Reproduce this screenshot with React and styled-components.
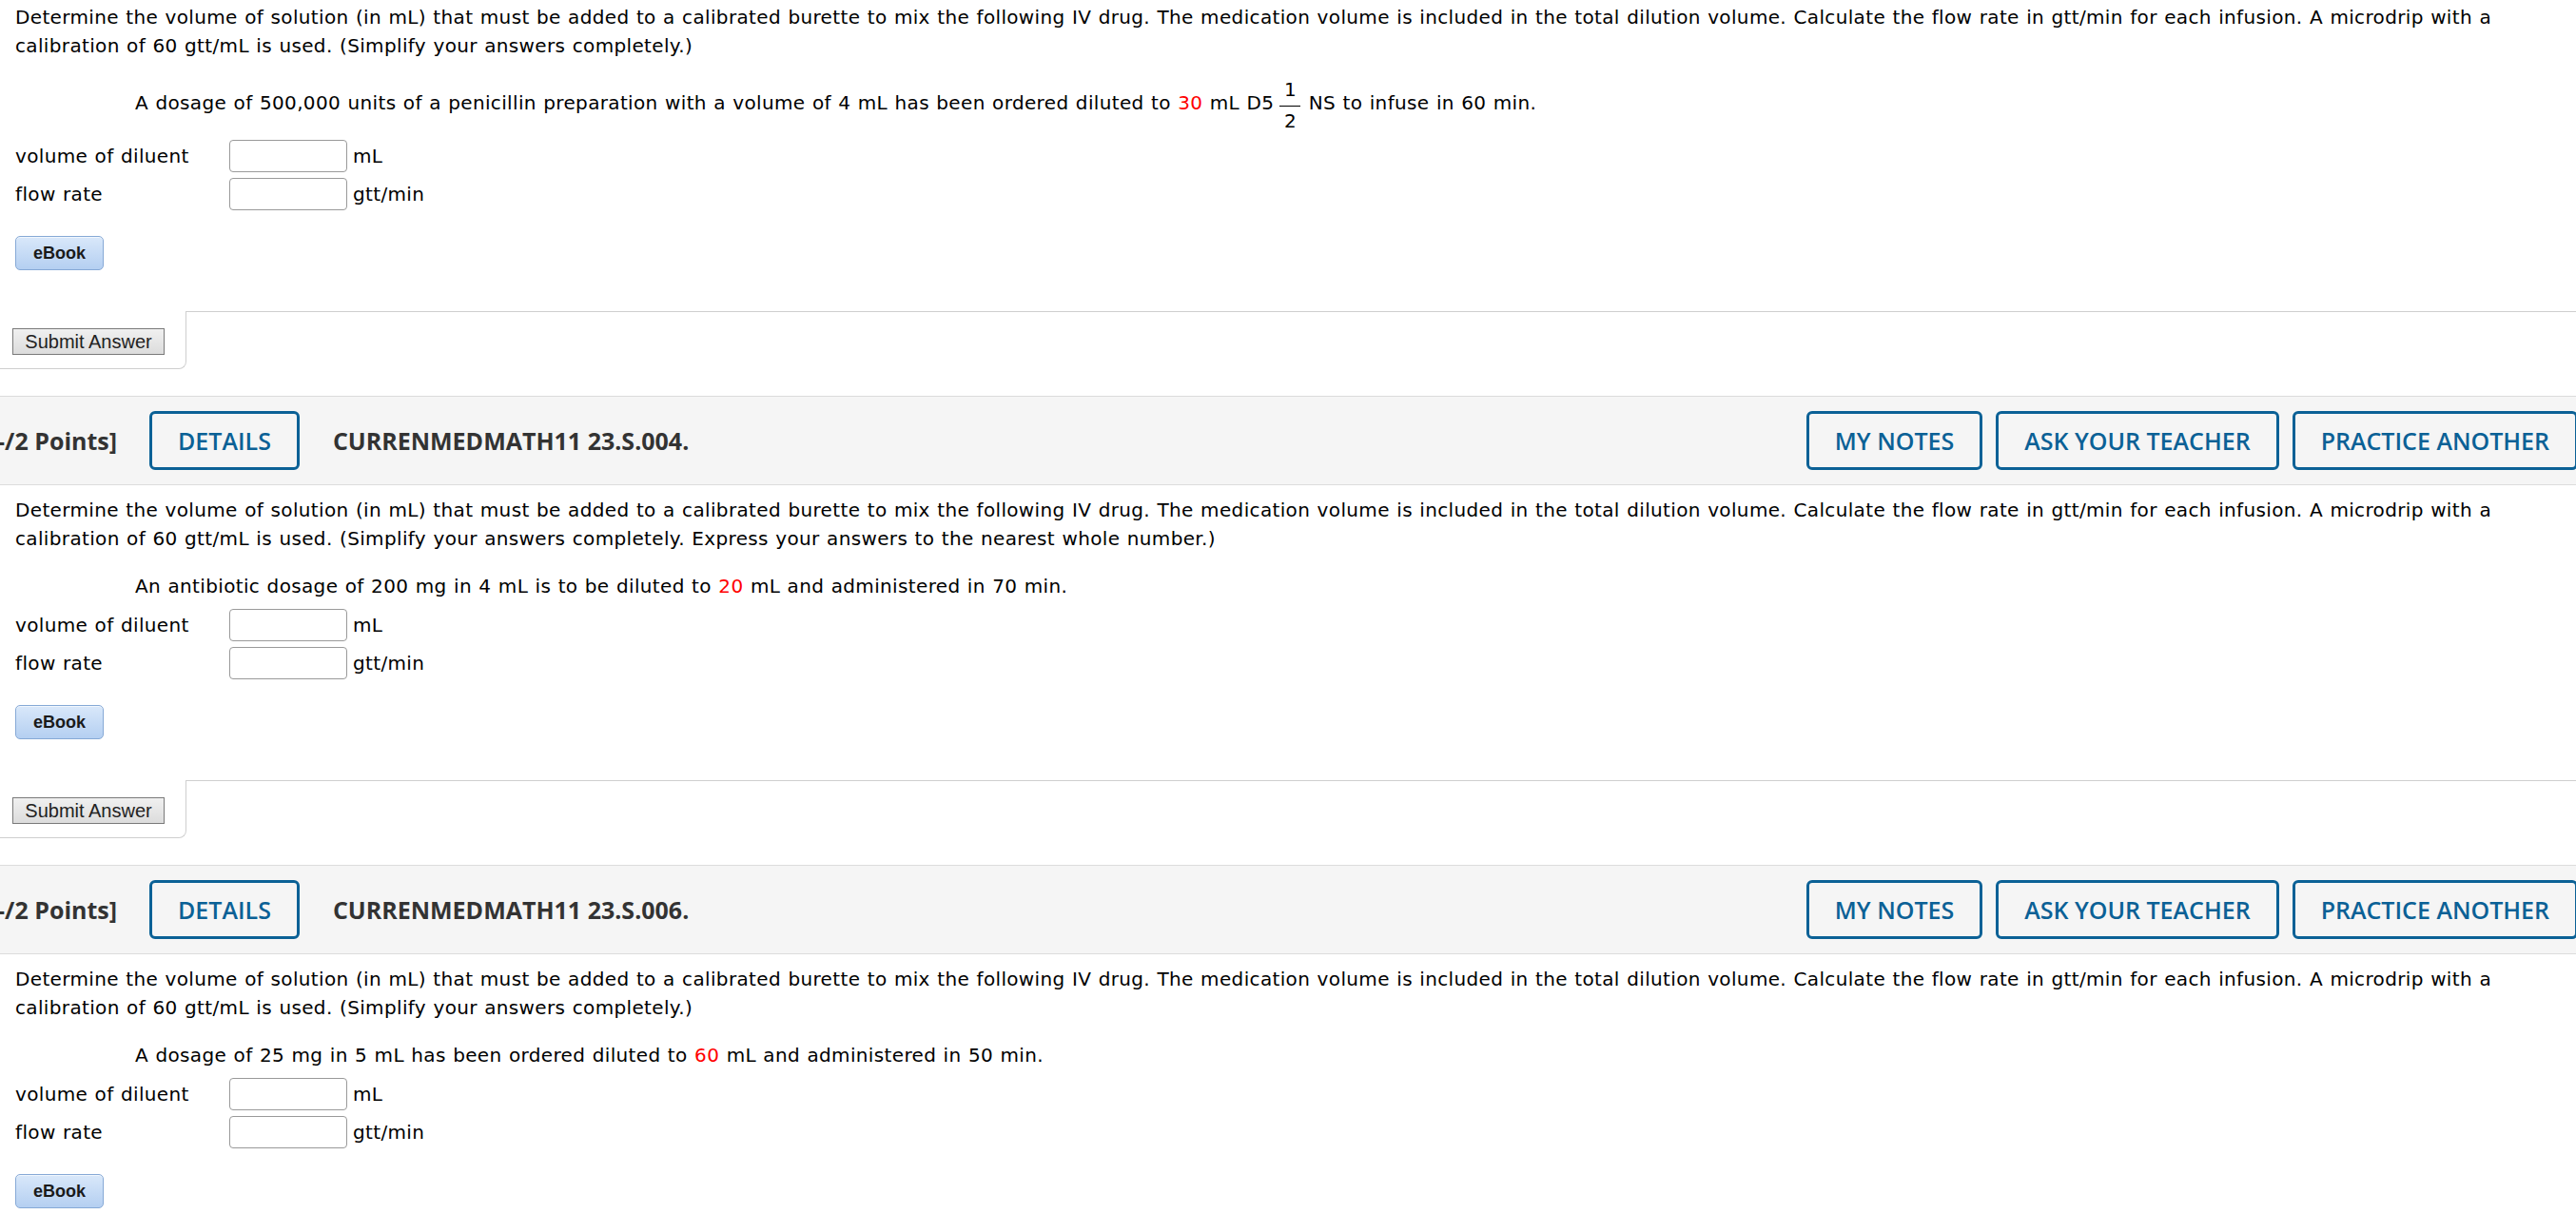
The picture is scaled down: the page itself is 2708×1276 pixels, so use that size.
import styled, { createGlobalStyle } from "styled-components";

const GlobalStyle = createGlobalStyle`
  html, body {
    margin: 0;
    padding: 0;
    overflow: hidden;
    background: #fff;
  }
  body {
    font-family: "DejaVu Sans", Verdana, sans-serif;
    font-size: 20px;
    letter-spacing: 0.35px;
    word-spacing: 0.7px;
    color: #000;
  }
`;

const PROMPT =
  "Determine the volume of solution (in mL) that must be added to a calibrated burette to mix the following IV drug. The medication volume is included in the total dilution volume. Calculate the flow rate in gtt/min for each infusion. A microdrip with a calibration of 60 gtt/mL is used.";

const Red = styled.span`
  color: #f00;
`;

const Frac = styled.span`
  display: inline-flex;
  flex-direction: column;
  align-items: stretch;
  width: 22px;
  margin: 0 1px 0 6px;
  line-height: 22px;
  vertical-align: 14px;
  text-align: center;
  letter-spacing: 0;
`;

const Num = styled.span`
  padding-bottom: 6px;
  border-bottom: 1px solid #000;
`;

const Den = styled.span`
  margin-top: 4px;
`;

const questions = [
  {
    code: null,
    note: "(Simplify your answers completely.)",
    dosage: (
      <>
        A dosage of 500,000 units of a penicillin preparation with a volume of 4 mL has been ordered
        diluted to <Red>30</Red> mL D5
        <Frac>
          <Num>1</Num>
          <Den>2</Den>
        </Frac>{" "}
        NS to infuse in 60 min.
      </>
    ),
  },
  {
    code: "CURRENMEDMATH11 23.S.004.",
    note: "(Simplify your answers completely. Express your answers to the nearest whole number.)",
    dosage: (
      <>
        An antibiotic dosage of 200 mg in 4 mL is to be diluted to <Red>20</Red> mL and administered
        in 70 min.
      </>
    ),
  },
  {
    code: "CURRENMEDMATH11 23.S.006.",
    note: "(Simplify your answers completely.)",
    dosage: (
      <>
        A dosage of 25 mg in 5 mL has been ordered diluted to <Red>60</Red> mL and administered in
        50 min.
      </>
    ),
  },
];

const Page = styled.div`
  width: 100%;
`;

const Header = styled.div`
  display: flex;
  align-items: center;
  margin-top: 28px;
  padding: 15px 0;
  background: #f5f5f5;
  border-top: 1px solid #dcdcdc;
  border-bottom: 1px solid #dcdcdc;
  font-family: "Open Sans", "DejaVu Sans", sans-serif;
  font-size: 25px;
  letter-spacing: 0;
  word-spacing: 0;
  color: #333;
  white-space: nowrap;
`;

const Points = styled.div`
  display: flex;
  justify-content: flex-end;
  width: 123px;
  overflow: hidden;
  font-weight: 700;
  flex-shrink: 0;
`;

const Code = styled.div`
  margin-left: 35px;
  font-weight: 700;
`;

const OutlineButton = styled.button`
  box-sizing: border-box;
  height: 62px;
  padding: 0 27px;
  border: 3px solid #0b6196;
  border-radius: 6px;
  background: transparent;
  color: #0b6196;
  font-family: "Open Sans", "DejaVu Sans", sans-serif;
  font-size: 25px;
  font-weight: 600;
  white-space: nowrap;
  flex-shrink: 0;
  margin-left: ${(p) => (p.$first ? "34px" : "0")};
`;

const Actions = styled.div`
  display: flex;
  gap: 14px;
  margin-left: auto;
  margin-right: -2px;
`;

const Body = styled.div`
  padding: ${(p) => (p.$top ? "3px" : "11px")} 16px 0;
`;

const Prompt = styled.p`
  margin: 0;
  line-height: 30px;
`;

const Dosage = styled.div`
  margin: 20px 0 0 126px;
  line-height: 30px;
`;

const AnswerGrid = styled.div`
  display: grid;
  grid-template-columns: 225px auto 1fr;
  row-gap: 6px;
  align-items: center;
  margin-top: 9px;
  line-height: 24px;
`;

const Field = styled.input`
  box-sizing: border-box;
  width: 124px;
  height: 34px;
  margin: 0;
  border: 1px solid #9a9a9a;
  border-radius: 4px;
  background: #fff;
`;

const Unit = styled.span`
  margin-left: 6px;
`;

const EBook = styled.button`
  display: block;
  box-sizing: border-box;
  width: 93px;
  height: 36px;
  margin-top: 27px;
  padding: 0;
  border: 1px solid #86a9d6;
  border-radius: 5px;
  background: linear-gradient(#d9e8fa, #b4cff1);
  box-shadow: inset 0 1px 0 rgba(255, 255, 255, 0.6);
  font-family: "Liberation Sans", Arial, sans-serif;
  font-size: 18px;
  font-weight: 700;
  letter-spacing: 0;
  color: #1a1a1a;
`;

const Footer = styled.div`
  display: flex;
  margin-top: 43px;
`;

const SubmitBox = styled.div`
  box-sizing: border-box;
  width: 196px;
  padding: 18px 0 14px 13px;
  border-right: 1px solid #cfcfcf;
  border-bottom: 1px solid #cfcfcf;
  border-bottom-right-radius: 8px;
`;

const FooterLine = styled.div`
  flex: 1;
  border-top: 1px solid #cfcfcf;
`;

const SubmitButton = styled.button`
  box-sizing: border-box;
  display: block;
  width: 160px;
  height: 28px;
  padding: 0;
  border: 1px solid #7a7a7a;
  border-radius: 0;
  background: linear-gradient(#f0f0f0, #dcdcdc);
  font-family: "Liberation Sans", Arial, sans-serif;
  font-size: 20px;
  letter-spacing: 0;
  word-spacing: 0;
  color: #222;
`;

const Question = ({ q, first }) => (
  <section>
    {q.code && (
      <Header>
        <Points>[--/2 Points]</Points>
        <OutlineButton $first>DETAILS</OutlineButton>
        <Code>{q.code}</Code>
        <Actions>
          <OutlineButton>MY NOTES</OutlineButton>
          <OutlineButton>ASK YOUR TEACHER</OutlineButton>
          <OutlineButton>PRACTICE ANOTHER</OutlineButton>
        </Actions>
      </Header>
    )}
    <Body $top={first}>
      <Prompt>
        {PROMPT} {q.note}
      </Prompt>
      <Dosage>{q.dosage}</Dosage>
      <AnswerGrid>
        <span>volume of diluent</span>
        <Field type="text" />
        <Unit>mL</Unit>
        <span>flow rate</span>
        <Field type="text" />
        <Unit>gtt/min</Unit>
      </AnswerGrid>
      <EBook>eBook</EBook>
    </Body>
    <Footer>
      <SubmitBox>
        <SubmitButton>Submit Answer</SubmitButton>
      </SubmitBox>
      <FooterLine />
    </Footer>
  </section>
);

export default function App() {
  return (
    <Page>
      <GlobalStyle />
      {questions.map((q, i) => (
        <Question key={i} q={q} first={i === 0} />
      ))}
    </Page>
  );
}
